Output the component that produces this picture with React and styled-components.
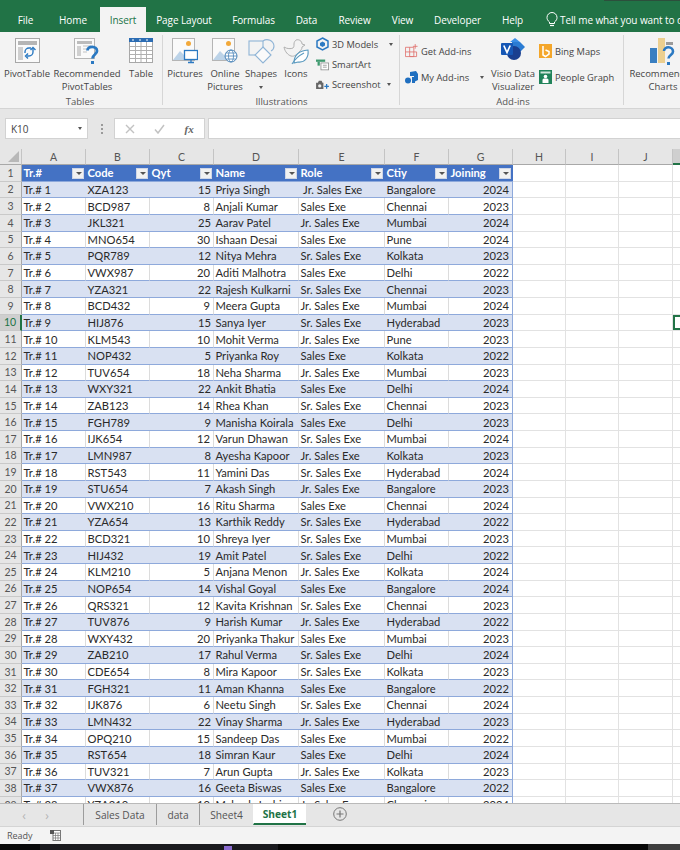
import React from 'react';
import styled, { createGlobalStyle } from 'styled-components';

const GlobalStyle = createGlobalStyle`
  html, body {
    margin: 0;
    padding: 0;
    background: #000;
  }
  * {
    box-sizing: border-box;
  }
`;

const UI_FONT = `"Open Sans", "Noto Sans", sans-serif`;
const CELL_FONT = `Lato, "Open Sans", sans-serif`;

const TABS = [
  ['File', 41],
  ['Home', 54],
  ['Insert', 46],
  ['Page Layout', 76],
  ['Formulas', 63],
  ['Data', 43],
  ['Review', 53],
  ['View', 43],
  ['Developer', 67],
  ['Help', 43],
];

const COLUMNS = ['A', 'B', 'C', 'D', 'E', 'F', 'G', 'H', 'I', 'J', 'K'];

const HEADERS = ['Tr.#', 'Code', 'Qyt', 'Name', 'Role', 'Ctiy', 'Joining'];

const DATA = [
  ['XZA123', 15, 'Priya Singh', ' Jr. Sales Exe', 'Bangalore', 2024],
  ['BCD987', 8, 'Anjali Kumar', 'Sales Exe', 'Chennai', 2023],
  ['JKL321', 25, 'Aarav Patel', 'Jr. Sales Exe', 'Mumbai', 2024],
  ['MNO654', 30, 'Ishaan Desai', 'Sales Exe', 'Pune', 2024],
  ['PQR789', 12, 'Nitya Mehra', 'Sr. Sales Exe', 'Kolkata', 2023],
  ['VWX987', 20, 'Aditi Malhotra', 'Sales Exe', 'Delhi', 2022],
  ['YZA321', 22, 'Rajesh Kulkarni', 'Sr. Sales Exe', 'Chennai', 2023],
  ['BCD432', 9, 'Meera Gupta', 'Jr. Sales Exe', 'Mumbai', 2024],
  ['HIJ876', 15, 'Sanya Iyer', 'Sr. Sales Exe', 'Hyderabad', 2023],
  ['KLM543', 10, 'Mohit Verma', 'Jr. Sales Exe', 'Pune', 2023],
  ['NOP432', 5, 'Priyanka Roy', 'Sales Exe', 'Kolkata', 2022],
  ['TUV654', 18, 'Neha Sharma', 'Jr. Sales Exe', 'Mumbai', 2023],
  ['WXY321', 22, 'Ankit Bhatia', 'Sales Exe', 'Delhi', 2024],
  ['ZAB123', 14, 'Rhea Khan', 'Sr. Sales Exe', 'Chennai', 2023],
  ['FGH789', 9, 'Manisha Koirala', 'Sales Exe', 'Delhi', 2023],
  ['IJK654', 12, 'Varun Dhawan', 'Sr. Sales Exe', 'Mumbai', 2024],
  ['LMN987', 8, 'Ayesha Kapoor', 'Jr. Sales Exe', 'Kolkata', 2023],
  ['RST543', 11, 'Yamini Das', 'Sr. Sales Exe', 'Hyderabad', 2024],
  ['STU654', 7, 'Akash Singh', 'Jr. Sales Exe', 'Bangalore', 2023],
  ['VWX210', 16, 'Ritu Sharma', 'Sales Exe', 'Chennai', 2024],
  ['YZA654', 13, 'Karthik Reddy', 'Sr. Sales Exe', 'Hyderabad', 2022],
  ['BCD321', 10, 'Shreya Iyer', 'Sr. Sales Exe', 'Mumbai', 2023],
  ['HIJ432', 19, 'Amit Patel', 'Sr. Sales Exe', 'Delhi', 2022],
  ['KLM210', 5, 'Anjana Menon', 'Jr. Sales Exe', 'Kolkata', 2024],
  ['NOP654', 14, 'Vishal Goyal', 'Sales Exe', 'Bangalore', 2024],
  ['QRS321', 12, 'Kavita Krishnan', 'Sr. Sales Exe', 'Chennai', 2023],
  ['TUV876', 9, 'Harish Kumar', 'Jr. Sales Exe', 'Hyderabad', 2022],
  ['WXY432', 20, 'Priyanka Thakur', 'Sales Exe', 'Mumbai', 2023],
  ['ZAB210', 17, 'Rahul Verma', 'Sr. Sales Exe', 'Delhi', 2024],
  ['CDE654', 8, 'Mira Kapoor', 'Sr. Sales Exe', 'Kolkata', 2023],
  ['FGH321', 11, 'Aman Khanna', 'Sales Exe', 'Bangalore', 2022],
  ['IJK876', 6, 'Neetu Singh', 'Sr. Sales Exe', 'Chennai', 2024],
  ['LMN432', 22, 'Vinay Sharma', 'Jr. Sales Exe', 'Hyderabad', 2023],
  ['OPQ210', 15, 'Sandeep Das', 'Sales Exe', 'Mumbai', 2022],
  ['RST654', 18, 'Simran Kaur', 'Sales Exe', 'Delhi', 2024],
  ['TUV321', 7, 'Arun Gupta', 'Jr. Sales Exe', 'Kolkata', 2023],
  ['VWX876', 16, 'Geeta Biswas', 'Sales Exe', 'Bangalore', 2022],
  ['YZA210', 10, 'Mahesh Joshi', 'Jr. Sales Exe', 'Chennai', 2024],
];

const PivotIcon = () => (
  <svg width='25' height='25' viewBox='0 0 25 25'>
    <rect x='.5' y='.5' width='24' height='24' fill='#fafafa' stroke='#a8a8a8' />
    <rect x='3' y='3' width='19' height='4' fill='#b5b5b5' />
    <rect x='3' y='9' width='5' height='13' fill='#cfcfcf' />
    <path d='M18 10v4a4 4 0 0 1-4 4h-2M10 15v-1a4 4 0 0 1 4-4h2' fill='none' stroke='#2b79c2' strokeWidth='1.4' />
    <path d='M15.5 12l2.5-2.5 2.5 2.5M13 15.5L10.5 18l2.5 2.5' fill='none' stroke='#2b79c2' strokeWidth='1.4' />
  </svg>
);

const RecommendedPivotIcon = () => (
  <svg width='26' height='27' viewBox='0 0 26 27'>
    <rect x='.5' y='.5' width='20' height='20' fill='#fafafa' stroke='#b5b5b5' />
    <rect x='3' y='3' width='15' height='3' fill='#bcbcbc' />
    <rect x='3' y='8' width='4' height='10' fill='#d0d0d0' />
    <path d='M9 8h8M9 11h5M9 14h4' stroke='#d5d5d5' strokeWidth='1.5' />
    <path d='M13.5 12.5c0-5 9.5-5 9.5 .5 0 3.5-4.5 3.5-4.5 7.5' fill='none' stroke='#2b79c2' strokeWidth='2.8' />
    <rect x='17' y='23' width='3' height='3' fill='#2b79c2' />
  </svg>
);

const TableIcon = () => (
  <svg width='24' height='25' viewBox='0 0 24 25'>
    <rect x='.5' y='.5' width='23' height='24' fill='#fff' stroke='#a8a8a8' />
    <rect x='0' y='0' width='24' height='4' fill='#2b6cb3' />
    <path d='M1 8.5h22M1 12.5h22M1 16.5h22M1 20.5h22M6.5 4v20M12 4v20M17.5 4v20' stroke='#b0b0b0' strokeWidth='1' />
    <path d='M3 2h2M10 2h2M17 2h2' stroke='#fff' strokeWidth='1' />
  </svg>
);

const PicturesIcon = () => (
  <svg width='26' height='27' viewBox='0 0 26 27'>
    <rect x='.5' y='.5' width='22' height='22' fill='#fafafa' stroke='#b5b5b5' />
    <circle cx='16.5' cy='5.5' r='2.5' fill='#f2a93b' />
    <path d='M1 22l7-9 5 5 3 4z' fill='#bcd3e8' />
    <rect x='12.5' y='12.5' width='13' height='9' fill='#fff' stroke='#2b79c2' strokeWidth='1.3' />
    <path d='M16 24.5h6M19 22v2.5' stroke='#2b79c2' strokeWidth='1.3' />
  </svg>
);

const OnlinePicturesIcon = () => (
  <svg width='26' height='27' viewBox='0 0 26 27'>
    <rect x='.5' y='.5' width='22' height='22' fill='#fafafa' stroke='#b5b5b5' />
    <circle cx='16.5' cy='5.5' r='2.5' fill='#f2a93b' />
    <path d='M1 22l7-9 5 5 3 4z' fill='#bcd3e8' />
    <circle cx='19' cy='18' r='6' fill='#fff' stroke='#4a84b8' strokeWidth='1' />
    <ellipse cx='19' cy='18' rx='2.5' ry='6' fill='none' stroke='#4a84b8' strokeWidth='.8' />
    <path d='M13 18h12M14 15h10M14 21h10' stroke='#4a84b8' strokeWidth='.8' />
  </svg>
);

const ShapesIcon = () => (
  <svg width='27' height='27' viewBox='0 0 27 27'>
    <rect x='1' y='3' width='14' height='14' fill='none' stroke='#8fb4d6' strokeWidth='1.1' />
    <path d='M15 3a7 7 0 0 1 11 5c0 2-1 4-3 5' fill='none' stroke='#8fb4d6' strokeWidth='1.1' />
    <path d='M15 9l8 8-8 8-8-8z' fill='#fafafa' stroke='#8fb4d6' strokeWidth='1.1' />
  </svg>
);

const IconsIcon = () => (
  <svg width='27' height='27' viewBox='0 0 27 27'>
    <path d='M13 2c3-1 6 1 6 4l3 1-3 2c0 2-1 3-2 4-3 3-5 6-9 5-3-1-6-4-7-9 3 2 7 2 9 1 1-1 1-2 1-4 0-2 1-3 2-4z' fill='none' stroke='#b0b0b0' strokeWidth='1' />
    <path d='M11 25c0-6 2-12 14-13 1 7-3 13-10 12z' fill='#fff' stroke='#5b9abf' strokeWidth='1.1' />
    <path d='M9 26c3-5 6-8 12-11' fill='none' stroke='#5b9abf' strokeWidth='1.1' />
  </svg>
);

const CubeIcon = () => (
  <svg width='13' height='14' viewBox='0 0 13 14'>
    <path d='M6.5 1l5.5 3v6l-5.5 3L1 10V4z' fill='none' stroke='#2b79c2' strokeWidth='1.5' />
    <path d='M6.5 4.5L9 6v2.5L6.5 10 4 8.5V6z' fill='#2b79c2' />
  </svg>
);

const SmartArtIcon = () => (
  <svg width='14' height='13' viewBox='0 0 17 15'>
    <path d='M0 1h12v3H0z' fill='#3f9a6f' />
    <path d='M2 4h3v5H2z' fill='#3f9a6f' />
    <rect x='6.5' y='5.5' width='10' height='9' fill='#fff' stroke='#8a8a8a' />
    <path d='M9 8.5h5M9 11h5' stroke='#8a8a8a' />
  </svg>
);

const ScreenshotIcon = () => (
  <svg width='13' height='11' viewBox='0 0 14 12'>
    <path d='M0 4h2l1-2h3l1 2h1v7H0z' fill='#666' />
    <circle cx='4' cy='7.5' r='1.8' fill='#eee' />
    <path d='M9 8h5M11.5 5.5v5' stroke='#2b79c2' strokeWidth='1.4' />
  </svg>
);

const GetAddInsIcon = () => (
  <svg width='13' height='14' viewBox='0 0 14 15'>
    <path d='M.5 3.5h9v10h-9zM5 3.5v10M.5 8.500h12v5H5' fill='none' stroke='#e0716d' strokeWidth='.9' />
    <path d='M11 0v5M8.500 2.500h5' stroke='#e0716d' strokeWidth='.9' />
  </svg>
);

const MyAddInsIcon = () => (
  <svg width='13' height='13' viewBox='0 0 13 13'>
    <path d='M5 1l6-1 2 3v6l-4 2V5H5z' fill='#1f6fc0' />
    <circle cx='3' cy='9.5' r='3' fill='#1f6fc0' />
    <path d='M7 6h3v6H7z' fill='#1f6fc0' />
  </svg>
);

const VisioIcon = () => (
  <svg width='24' height='22' viewBox='0 0 24 22'>
    <path d='M9 4l5-4 5 4z' fill='#3a8ee6' />
    <path d='M11 4h8l5 5-5 5h-8z' fill='#2b7cd3' />
    <circle cx='13' cy='15' r='7' fill='#1a3f8f' />
    <rect x='0' y='5' width='12' height='12' rx='1' fill='#1657b5' />
    <path d='M2.8 7.5L6 14.5l3.2-7' fill='none' stroke='#fff' strokeWidth='1.7' />
  </svg>
);

const BingIcon = () => (
  <svg width='13' height='14' viewBox='0 0 13 14'>
    <rect width='13' height='14' fill='#f4a62a' />
    <path d='M4 2v9l2.5 1.5L10 10V7.5L6.5 6' fill='none' stroke='#fff' strokeWidth='1.5' />
  </svg>
);

const PeopleGraphIcon = () => (
  <svg width='13' height='14' viewBox='0 0 13 14'>
    <rect width='13' height='14' fill='#21835a' />
    <rect x='1.5' y='1.5' width='10' height='2' fill='#cfe6da' />
    <circle cx='6.5' cy='6.5' r='1.8' fill='#fff' />
    <path d='M3.5 13V10q0-1.5 1.5-1.5h3q1.500 0 1.500 1.500v3z' fill='#fff' />
  </svg>
);

const ChartsIcon = () => (
  <svg width='26' height='28' viewBox='0 0 26 28'>
    <rect x='0' y='10' width='7' height='15' fill='#3a7fc1' />
    <rect x='8' y='0' width='7' height='25' fill='#eccf8f' />
    <rect x='16' y='4' width='7' height='3' fill='#9a9a9a' />
    <path d='M14 13c0-5 9-5 9 .5 0 3.5-4.5 3.5-4.5 7' fill='none' stroke='#2b79c2' strokeWidth='2.6' />
    <rect x='17' y='24' width='3' height='3' fill='#2b79c2' />
  </svg>
);

const BulbIcon = () => (
  <svg width='12' height='15' viewBox='0 0 12 15'>
    <path d='M3.5 10C1.5 8.5 1 7 1 5.5a5 5 0 0 1 10 0c0 1.5-.5 3-2.5 4.5v1.5h-5z' fill='none' stroke='#fff' strokeWidth='1' />
    <path d='M4 13.5h4' stroke='#fff' strokeWidth='1.2' />
  </svg>
);

const CancelIcon = () => (
  <svg width='10' height='10' viewBox='0 0 10 10'>
    <path d='M1 1l8 8M9 1l-8 8' stroke='#c2c2c2' strokeWidth='1.4' />
  </svg>
);

const EnterIcon = () => (
  <svg width='11' height='10' viewBox='0 0 11 10'>
    <path d='M1 5.5L4 9l6-8' fill='none' stroke='#c2c2c2' strokeWidth='1.5' />
  </svg>
);

const MacroIcon = () => (
  <svg width='11' height='11' viewBox='0 0 11 11'>
    <rect x='3' y='.5' width='7.5' height='10' fill='#fff' stroke='#777' />
    <rect x='0' y='0' width='4' height='4' fill='#555' />
    <path d='M4 3h6M3 5.5h7.5M3 8h7.5M5.5 3v7.5M8 3v7.5' stroke='#777' strokeWidth='.7' />
  </svg>
);

const PlusCircleIcon = () => (
  <svg width='14' height='14' viewBox='0 0 14 14'>
    <circle cx='7' cy='7' r='6.3' fill='none' stroke='#777' strokeWidth='1' />
    <path d='M7 3.5v7M3.5 7h7' stroke='#777' strokeWidth='1.2' />
  </svg>
);

function App() {
  return (
    <>
      <GlobalStyle />
      <Window>
        <TitleBar>
          <TitleSliver />
          {TABS.map(([tab, width]) => (
            <Tab key={tab} $width={width} $active={tab === 'Insert'}>
              {tab}
            </Tab>
          ))}
          <TellMe>
            <BulbIcon />
            Tell me what you want to do
          </TellMe>
        </TitleBar>

        <Ribbon>
          <Group $width={163} $left={4}>
            <Items>
              <BigButton $width={46}>
                <BigIcon><PivotIcon /></BigIcon>
                <BigLabel>PivotTable</BigLabel>
              </BigButton>
              <BigButton $width={70}>
                <BigIcon><RecommendedPivotIcon /></BigIcon>
                <BigLabel>Recommended<br />PivotTables</BigLabel>
              </BigButton>
              <BigButton $width={34}>
                <BigIcon><TableIcon /></BigIcon>
                <BigLabel>Table</BigLabel>
              </BigButton>
            </Items>
            <GroupLabel $shift={4}>Tables</GroupLabel>
          </Group>

          <Group $width={237} $left={3}>
            <Items>
              <BigButton $width={38}>
                <BigIcon><PicturesIcon /></BigIcon>
                <BigLabel>Pictures</BigLabel>
              </BigButton>
              <BigButton $width={38}>
                <BigIcon><OnlinePicturesIcon /></BigIcon>
                <BigLabel>Online<br />Pictures</BigLabel>
              </BigButton>
              <BigButton $width={30}>
                <BigIcon><ShapesIcon /></BigIcon>
                <BigLabel>Shapes<br /><Caret $gap={0} /></BigLabel>
              </BigButton>
              <BigButton $width={36}>
                <BigIcon><IconsIcon /></BigIcon>
                <BigLabel>Icons</BigLabel>
              </BigButton>
              <SmallColumn $rowHeight={20} $offset={-4}>
                <SmallItem><SmallIcon><CubeIcon /></SmallIcon>3D Models<Caret $gap={8} /></SmallItem>
                <SmallItem><SmallIcon><SmartArtIcon /></SmallIcon>SmartArt</SmallItem>
                <SmallItem><SmallIcon><ScreenshotIcon /></SmallIcon>Screenshot<Caret $gap={3} /></SmallItem>
              </SmallColumn>
            </Items>
            <GroupLabel>Illustrations</GroupLabel>
          </Group>

          <Group $width={224} $left={5}>
            <Items>
              <SmallColumn $rowHeight={26} $width={84}>
                <SmallItem><SmallIcon><GetAddInsIcon /></SmallIcon>Get Add-ins</SmallItem>
                <SmallItem><SmallIcon><MyAddInsIcon /></SmallIcon>My Add-ins<Caret $gap={8} /></SmallItem>
              </SmallColumn>
              <BigButton $width={44}>
                <BigIcon><VisioIcon /></BigIcon>
                <BigLabel>Visio Data<br />Visualizer</BigLabel>
              </BigButton>
              <SmallColumn $rowHeight={26} $left={2}>
                <SmallItem><SmallIcon><BingIcon /></SmallIcon>Bing Maps</SmallItem>
                <SmallItem><SmallIcon><PeopleGraphIcon /></SmallIcon>People Graph</SmallItem>
              </SmallColumn>
            </Items>
            <GroupLabel>Add-ins</GroupLabel>
          </Group>

          <Group $width={80} $left={4} $last>
            <Items>
              <BigButton $width={70}>
                <BigIcon><ChartsIcon /></BigIcon>
                <BigLabel>Recommended<br />Charts</BigLabel>
              </BigButton>
            </Items>
          </Group>
        </Ribbon>

        <FormulaBar>
          <NameBox>
            K10
            <Caret $gap={0} />
          </NameBox>
          <Grip />
          <FormulaButtons>
            <FormulaGlyph><CancelIcon /></FormulaGlyph>
            <FormulaGlyph><EnterIcon /></FormulaGlyph>
            <FxGlyph>fx</FxGlyph>
          </FormulaButtons>
          <FormulaInput />
        </FormulaBar>

        <Sheet>
          <Corner />
          {COLUMNS.map((col) => (
            <ColHeader key={col} $selected={col === 'K'}>{col}</ColHeader>
          ))}

          <RowHeader>1</RowHeader>
          {HEADERS.map((title) => (
            <HeaderCell key={title}>
              {title}
              <FilterButton />
            </HeaderCell>
          ))}
          <EmptyCell />
          <EmptyCell />
          <EmptyCell />
          <EmptyCell />

          {DATA.map((row, index) => {
            const rowNumber = index + 2;
            const band = index % 2 === 0;
            return (
              <React.Fragment key={rowNumber}>
                <RowHeader $selected={rowNumber === 10}>{rowNumber}</RowHeader>
                <Cell $band={band}>{`Tr.# ${index + 1}`}</Cell>
                <Cell $band={band}>{row[0]}</Cell>
                <Cell $band={band} $numeric>{row[1]}</Cell>
                <Cell $band={band}>{row[2]}</Cell>
                <Cell $band={band}>{row[3]}</Cell>
                <Cell $band={band}>{row[4]}</Cell>
                <Cell $band={band} $numeric $lastColumn>{row[5]}</Cell>
                <EmptyCell />
                <EmptyCell />
                <EmptyCell />
                <EmptyCell $selected={rowNumber === 10} />
              </React.Fragment>
            );
          })}
        </Sheet>

        <SheetTabs>
          <TabNav>
            <NavArrow>‹</NavArrow>
            <NavArrow>›</NavArrow>
          </TabNav>
          <SheetTab $width={73}>Sales Data</SheetTab>
          <SheetTab $width={43}>data</SheetTab>
          <SheetTab $width={54}>Sheet4</SheetTab>
          <SheetTab $width={53} $active>Sheet1</SheetTab>
          <AddSheet><PlusCircleIcon /></AddSheet>
        </SheetTabs>

        <StatusBar>
          Ready
          <MacroIcon />
        </StatusBar>

        <Taskbar>
          <TaskSegment $width={40} $color='#080808' />
          <TaskSegment $width={238} $color='#1a1a1e'>
            <TaskMark />
          </TaskSegment>
          <TaskSegment $grow $color='#060606' />
          <TaskSegment $width={32} $color='#3d3d3d' />
        </Taskbar>
      </Window>
    </>
  );
}

export default App;

const Window = styled.div`
  width: 680px;
  height: 850px;
  overflow: hidden;
  display: flex;
  flex-direction: column;
  background: #e6e6e6;
  font-family: ${UI_FONT};
`;

const TitleBar = styled.div`
  position: relative;
  height: 32px;
  flex: none;
  display: flex;
  align-items: flex-end;
  padding-left: 5px;
  background: #217346;
  white-space: nowrap;
  overflow: hidden;
`;

const TitleSliver = styled.div`
  position: absolute;
  top: 0;
  right: 0;
  width: 76px;
  height: 1px;
  background: #2c4f3c;
`;

const Tab = styled.div`
  width: ${(p) => p.$width}px;
  flex: none;
  height: 25px;
  display: flex;
  align-items: center;
  justify-content: center;
  font-size: 10px;
  font-weight: 500;
  letter-spacing: -0.1px;
  color: ${(p) => (p.$active ? '#217346' : '#fff')};
  background: ${(p) => (p.$active ? '#f3f3f3' : 'transparent')};
`;

const TellMe = styled.div`
  height: 25px;
  flex: none;
  margin-left: 12px;
  display: flex;
  align-items: center;
  gap: 2px;
  font-size: 10px;
  font-weight: 500;
  letter-spacing: -0.1px;
  color: #fff;
`;

const Ribbon = styled.div`
  height: 77px;
  flex: none;
  display: flex;
  padding-top: 3px;
  background: #f3f3f3;
  border-bottom: 1px solid #d4d4d4;
  white-space: nowrap;
`;

const Group = styled.div`
  width: ${(p) => p.$width}px;
  height: 70px;
  flex: none;
  display: flex;
  flex-direction: column;
  padding: 3px 2px 0 ${(p) => p.$left}px;
  border-right: ${(p) => (p.$last ? 'none' : '1px solid #d6d6d6')};
`;

const Items = styled.div`
  flex: 1;
  display: flex;
  align-items: flex-start;
  gap: 2px;
  min-height: 0;
`;

const GroupLabel = styled.div`
  height: 12px;
  margin-bottom: -3px;
  padding-right: ${(p) => p.$shift || 0}px;
  line-height: 12px;
  font-size: 9.5px;
  text-align: center;
  color: #555;
`;

const BigButton = styled.div`
  width: ${(p) => p.$width}px;
  flex: none;
  display: flex;
  flex-direction: column;
  align-items: center;
`;

const BigIcon = styled.div`
  height: 29px;
  display: flex;
  align-items: flex-start;
  justify-content: center;
`;

const BigLabel = styled.div`
  line-height: 13px;
  font-size: 9.5px;
  text-align: center;
  color: #444;
`;

const SmallColumn = styled.div`
  margin-top: ${(p) => p.$offset || 0}px;
  margin-left: ${(p) => p.$left || 0}px;
  width: ${(p) => (p.$width ? `${p.$width}px` : 'auto')};
  display: grid;
  grid-auto-rows: ${(p) => p.$rowHeight}px;
`;

const SmallItem = styled.div`
  display: flex;
  align-items: center;
  gap: 3px;
  font-size: 9.3px;
  color: #444;
`;

const SmallIcon = styled.span`
  width: 13px;
  flex: none;
  display: flex;
  align-items: center;
  justify-content: center;
`;

const Caret = styled.span`
  display: inline-block;
  width: 0;
  height: 0;
  margin-left: ${(p) => p.$gap}px;
  vertical-align: middle;
  border-left: 2.5px solid transparent;
  border-right: 2.5px solid transparent;
  border-top: 3px solid #555;
`;

const FormulaBar = styled.div`
  height: 40px;
  flex: none;
  display: flex;
  align-items: center;
  padding: 0 0 1px 5px;
  background: #e6e6e6;
`;

const NameBox = styled.div`
  width: 83px;
  height: 21px;
  display: flex;
  align-items: center;
  justify-content: space-between;
  padding: 0 5px;
  background: #fff;
  border: 1px solid #d2d2d2;
  font-size: 10px;
  color: #444;
`;

const Grip = styled.div`
  width: 2px;
  height: 10px;
  margin: 0 11px 0 13px;
  background: repeating-linear-gradient(#9a9a9a 0 2px, transparent 2px 4px);
`;

const FormulaButtons = styled.div`
  width: 91px;
  height: 21px;
  display: flex;
  align-items: center;
  background: #fff;
  border: 1px solid #d2d2d2;
`;

const FormulaGlyph = styled.span`
  width: 30px;
  display: flex;
  align-items: center;
  justify-content: center;
`;

const FxGlyph = styled.span`
  width: 30px;
  text-align: center;
  font-family: "Liberation Serif", serif;
  font-style: italic;
  font-size: 11px;
  font-weight: 700;
  color: #666;
`;

const FormulaInput = styled.div`
  flex: 1;
  height: 21px;
  margin-left: 3px;
  background: #fff;
  border: 1px solid #d2d2d2;
  border-right: none;
`;

const Sheet = styled.div`
  height: 654px;
  flex: none;
  overflow: hidden;
  display: grid;
  grid-template-columns: 22px 64px 64px 64px 85px 86px 64px 64px 53px 53px 54px 53px;
  grid-template-rows: 16px;
  grid-auto-rows: 16.64px;
  background: #fff;
  font-family: ${CELL_FONT};
  font-size: 11.2px;
  color: #2a2a2a;
`;

const Corner = styled.div`
  position: relative;
  background: #e6e6e6;
  border-right: 1px solid #c4c4c4;
  border-bottom: 1px solid #a8a8a8;
  &::after {
    content: '';
    position: absolute;
    right: 2px;
    bottom: 2px;
    width: 11px;
    height: 11px;
    background: #b8b8b8;
    clip-path: polygon(100% 0, 100% 100%, 0 100%);
  }
`;

const ColHeader = styled.div`
  display: flex;
  align-items: center;
  justify-content: center;
  background: ${(p) => (p.$selected ? '#cfcfcf' : '#e6e6e6')};
  border-right: 1px solid #c4c4c4;
  border-bottom: ${(p) => (p.$selected ? '2px solid #217346' : '1px solid #a8a8a8')};
  font-size: 10.5px;
  color: #555;
`;

const RowHeader = styled.div`
  display: flex;
  align-items: center;
  justify-content: center;
  background: ${(p) => (p.$selected ? '#cfcfcf' : '#e6e6e6')};
  border-right: ${(p) => (p.$selected ? '2px solid #217346' : '1px solid #a8a8a8')};
  border-bottom: 1px solid #c9c9c9;
  font-size: 10.5px;
  color: ${(p) => (p.$selected ? '#217346' : '#555')};
`;

const HeaderCell = styled.div`
  position: relative;
  display: flex;
  align-items: center;
  padding-left: 1.5px;
  background: #4472c4;
  border-bottom: 1px solid #8ea9db;
  font-weight: 700;
  color: #fff;
`;

const FilterButton = styled.span`
  position: absolute;
  right: 2px;
  top: 3px;
  width: 12px;
  height: 11px;
  background: #f1f1f1;
  border: 1px solid #cfd6e6;
  &::after {
    content: '';
    position: absolute;
    left: 2.5px;
    top: 3px;
    border-left: 3px solid transparent;
    border-right: 3px solid transparent;
    border-top: 3px solid #555;
  }
`;

const Cell = styled.div`
  display: flex;
  align-items: center;
  justify-content: ${(p) => (p.$numeric ? 'flex-end' : 'flex-start')};
  padding: 0 ${(p) => (p.$numeric ? '3px' : '0')} 0 ${(p) => (p.$numeric ? '0' : '1.5px')};
  white-space: pre;
  overflow: hidden;
  background: ${(p) => (p.$band ? '#d9e1f2' : '#fff')};
  border-bottom: 1px solid #8ea9db;
  border-right: ${(p) => {
    if (p.$lastColumn) return '1px solid #8ea9db';
    return p.$band ? 'none' : '1px solid #dcdcdc';
  }};
`;

const EmptyCell = styled.div`
  border-right: 1px solid #e2e2e2;
  border-bottom: 1px solid #e2e2e2;
  box-shadow: ${(p) => (p.$selected ? 'inset 0 0 0 2px #217346' : 'none')};
`;

const SheetTabs = styled.div`
  height: 23px;
  flex: none;
  display: flex;
  background: #e6e6e6;
  border-top: 1px solid #b9b9b9;
  font-size: 10.2px;
  color: #555;
`;

const TabNav = styled.div`
  width: 83px;
  display: flex;
  gap: 15px;
  padding-left: 20px;
  align-items: center;
`;

const NavArrow = styled.span`
  width: 8px;
  text-align: center;
  font-size: 12px;
  color: #b4b4b4;
`;

const SheetTab = styled.div`
  width: ${(p) => p.$width}px;
  height: 21px;
  display: flex;
  align-items: center;
  justify-content: center;
  background: ${(p) => (p.$active ? '#fff' : 'transparent')};
  border-left: 1px solid #9c9c9c;
  border-left-color: ${(p) => (p.$active ? 'transparent' : '#9c9c9c')};
  border-bottom: ${(p) => (p.$active ? '2px solid #217346' : 'none')};
  font-weight: ${(p) => (p.$active ? 700 : 400)};
  color: ${(p) => (p.$active ? '#217346' : '#555')};
`;

const AddSheet = styled.div`
  margin-left: 27px;
  display: flex;
  align-items: center;
  padding-bottom: 2px;
`;

const StatusBar = styled.div`
  height: 18px;
  flex: none;
  display: flex;
  align-items: center;
  gap: 17px;
  padding-left: 7px;
  background: #f3f3f3;
  border-top: 1px solid #d4d4d4;
  font-size: 9px;
  color: #555;
`;

const Taskbar = styled.div`
  flex: 1;
  display: flex;
`;

const TaskSegment = styled.div`
  position: relative;
  flex: ${(p) => (p.$grow ? '1' : 'none')};
  width: ${(p) => (p.$width ? `${p.$width}px` : 'auto')};
  background: ${(p) => p.$color};
`;

const TaskMark = styled.span`
  position: absolute;
  left: 184px;
  top: 2px;
  width: 8px;
  height: 4px;
  background: #8a6bd0;
`;
